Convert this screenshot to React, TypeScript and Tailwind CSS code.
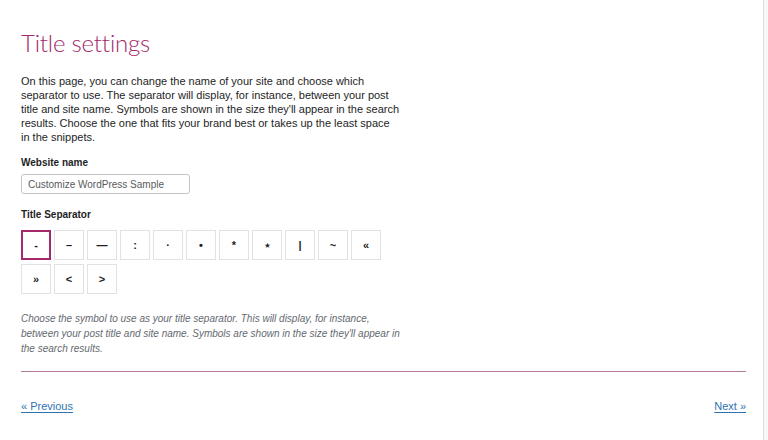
import React from "react";

const seps = ["-", "–", "—", ":", "·", "•", "*", "⋆", "|", "~", "«", "»", "<", ">"];

export default function App() {
  return (
    <div className="w-[768px] h-[440px] bg-[#f7f7f7] flex overflow-hidden" style={{ fontFamily: "'Liberation Sans', Arial, sans-serif" }}>
      <div className="w-[764px] h-full bg-white border-r border-[#dcdcdc] pl-[21px] pr-[18px] pt-[28px] flex flex-col">
        <h1 className="text-[24px] leading-[30px] font-light text-[#a4286a] tracking-[-0.2px]" style={{ fontFamily: "Lato, 'Open Sans', sans-serif" }}>
          Title settings
        </h1>
        <p className="mt-[16px] w-[380px] text-[11px] leading-[14px] text-[#1e1e1e]">
          On this page, you can change the name of your site and choose which separator to use. The separator will display, for instance, between your post title and site name. Symbols are shown in the size they'll appear in the search results. Choose the one that fits your brand best or takes up the least space in the snippets.
        </p>
        <label className="mt-[12px] text-[10px] leading-[13px] font-bold text-[#1e1e1e]">Website name</label>
        <div className="mt-[5px] w-[169px] h-[20px] border border-[#c4c4c4] rounded-[3px] px-[6px] flex items-center text-[10px] text-[#5a5a5a]">
          Customize WordPress Sample
        </div>
        <div className="mt-[14px] text-[10px] leading-[13px] font-bold text-[#1e1e1e]">Title Separator</div>
        <div className="mt-[9px] w-[370px] flex flex-wrap gap-x-[3px] gap-y-[4px]">
          {seps.map((s, i) => (
            <div
              key={i}
              className={
                i === 0
                  ? "w-[30px] h-[30px] border-2 border-[#a4286a] flex items-center justify-center text-[11px] font-bold text-[#1e1e1e]"
                  : "w-[30px] h-[30px] border border-[#e2e2e2] flex items-center justify-center text-[11px] font-bold text-[#1e1e1e]"
              }
            >
              {s}
            </div>
          ))}
        </div>
        <p className="mt-[17px] w-[380px] text-[10px] leading-[15px] italic text-[#646970]">
          Choose the symbol to use as your title separator. This will display, for instance, between your post title and site name. Symbols are shown in the size they'll appear in the search results.
        </p>
        <div className="mt-[15px] w-[725px] h-px bg-[#b27a96]"></div>
        <div className="mt-[27px] w-[725px] flex justify-between text-[11px] leading-[15px] text-[#2f73b0]">
          <a className="underline underline-offset-2 decoration-[#2f73b0]">« Previous</a>
          <a className="underline underline-offset-2 decoration-[#2f73b0]">Next »</a>
        </div>
      </div>
    </div>
  );
}
